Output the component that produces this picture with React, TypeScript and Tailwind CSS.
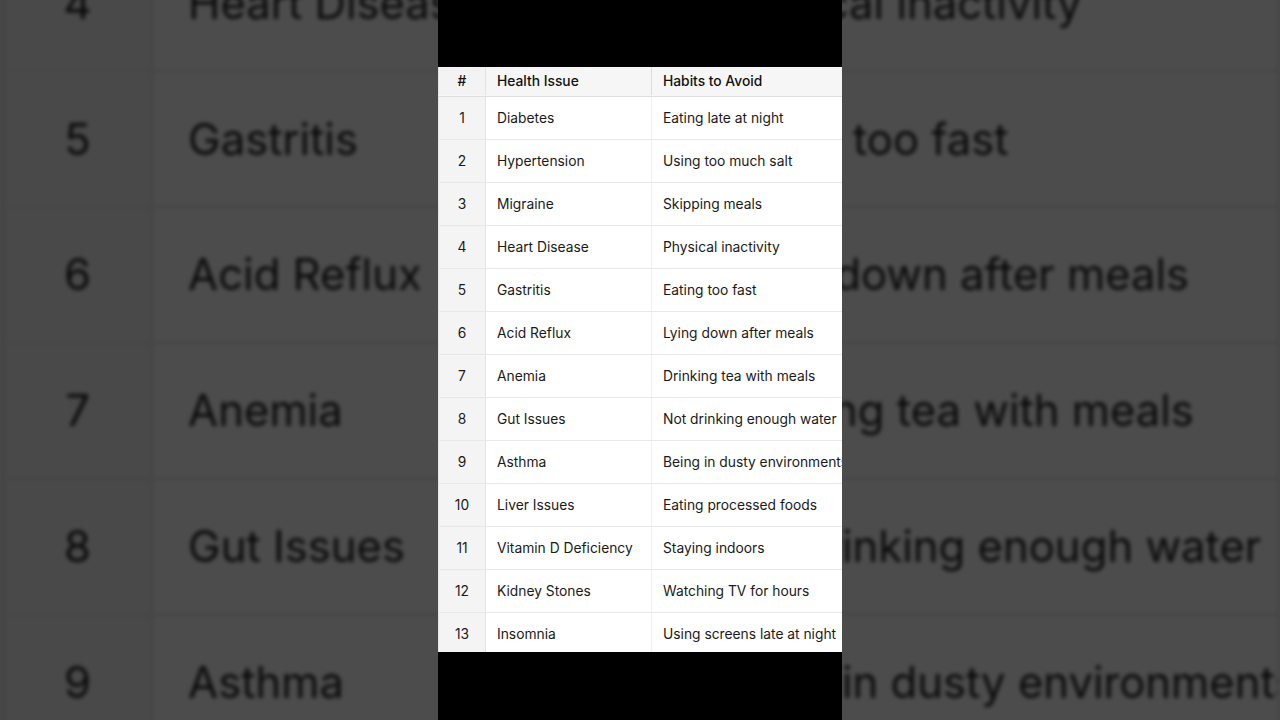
import React from "react";

const rows: [string, string][] = [
  ["Diabetes", "Eating late at night"],
  ["Hypertension", "Using too much salt"],
  ["Migraine", "Skipping meals"],
  ["Heart Disease", "Physical inactivity"],
  ["Gastritis", "Eating too fast"],
  ["Acid Reflux", "Lying down after meals"],
  ["Anemia", "Drinking tea with meals"],
  ["Gut Issues", "Not drinking enough water"],
  ["Asthma", "Being in dusty environments"],
  ["Liver Issues", "Eating processed foods"],
  ["Vitamin D Deficiency", "Staying indoors"],
  ["Kidney Stones", "Watching TV for hours"],
  ["Insomnia", "Using screens late at night"],
];

function Frame() {
  return (
    <div
      className="w-[404px] h-[720px] shrink-0 bg-black flex flex-col overflow-hidden"
      style={{ fontFamily: "Inter, 'Noto Sans', sans-serif" }}
    >
      <div className="h-[67px] shrink-0 bg-black" />
      <div className="h-[585px] shrink-0 overflow-hidden bg-white">
        <div className="w-[440px] flex flex-col">
          <div className="h-[30px] flex bg-[#f6f6f6] border-b border-[#dedede] text-[13.8px] font-medium text-[#111] pb-[1px]">
            <div className="w-[48px] shrink-0 flex items-center justify-center border-l border-[#e4e4e4] border-r border-[#dcdcdc] bg-[#f3f3f3]">
              #
            </div>
            <div className="w-[166px] shrink-0 flex items-center pl-[11px] border-r border-[#dcdcdc]">
              Health Issue
            </div>
            <div className="flex-1 flex items-center pl-[11px]">Habits to Avoid</div>
          </div>
          {rows.map(([issue, habit], i) => (
            <div
              key={i}
              className="h-[43px] shrink-0 flex border-b border-[#e8e8e8] text-[13.8px] text-[#1a1a1a]"
            >
              <div className="w-[48px] shrink-0 flex items-center justify-center border-l border-[#e4e4e4] border-r border-[#e2e2e2] bg-[#f4f4f4]">
                {i + 1}
              </div>
              <div className="w-[166px] shrink-0 flex items-center pl-[11px] border-r border-[#f0f0f0]">
                {issue}
              </div>
              <div className="flex-1 flex items-center pl-[11px] whitespace-nowrap">{habit}</div>
            </div>
          ))}
        </div>
      </div>
      <div className="flex-1 bg-black" />
    </div>
  );
}

export default function App() {
  return (
    <div className="relative w-[1280px] h-[720px] overflow-hidden bg-[#4d4d4d]">
      <div className="absolute inset-0 flex items-center justify-center overflow-hidden">
        <div className="scale-[3.16] brightness-[0.3] blur-[0.6px]">
          <Frame />
        </div>
      </div>
      <div className="relative h-full flex justify-center">
        <Frame />
      </div>
    </div>
  );
}
